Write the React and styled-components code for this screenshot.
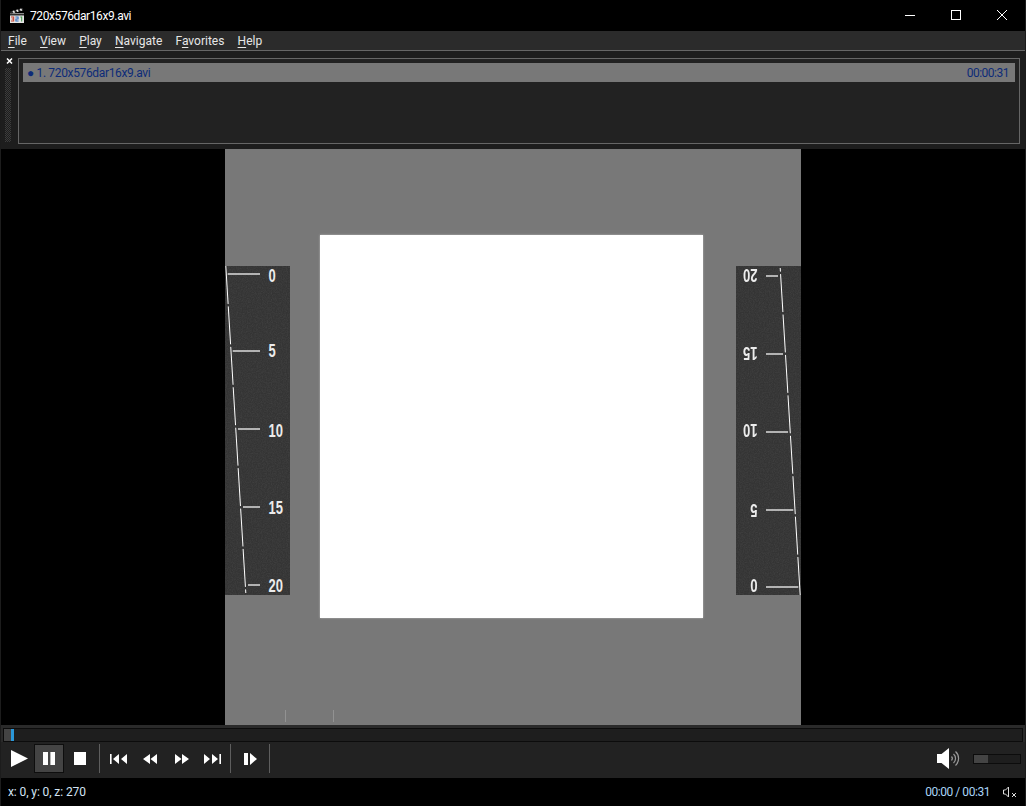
import React from "react";
import styled, { createGlobalStyle } from "styled-components";

const GlobalStyle = createGlobalStyle`
  html, body {
    margin: 0;
    padding: 0;
    background: #000;
  }
  body {
    font-family: Roboto, "Noto Sans", sans-serif;
    font-size: 12px;
    overflow: hidden;
  }
`;

const Window = styled.div`
  width: 1026px;
  height: 806px;
  box-sizing: border-box;
  border-left: 1px solid #1c1c1c;
  border-right: 1px solid #1c1c1c;
  display: flex;
  flex-direction: column;
  background: #000;
`;

const TitleBar = styled.div`
  height: 31px;
  flex: none;
  display: flex;
  align-items: center;
  background: #000;
  color: #fff;
  padding-left: 9px;
`;

const TitleText = styled.span`
  margin-left: 6px;
  font-size: 12px;
  letter-spacing: -0.4px;
`;

const WindowButtons = styled.div`
  margin-left: auto;
  display: flex;
  height: 100%;
`;

const WindowButton = styled.div`
  width: 46px;
  display: flex;
  align-items: center;
  justify-content: center;
  padding-bottom: 1px;
`;

const MenuBar = styled.div`
  height: 19px;
  flex: none;
  display: flex;
  align-items: center;
  gap: 13.2px;
  padding-left: 7px;
  background: #2b2b2b;
  border-bottom: 1px solid #666;
  color: #e6e6e6;
  font-size: 12px;
`;

const MenuItem = styled.span`
  u {
    text-underline-offset: 2px;
  }
`;

const PlaylistPanel = styled.div`
  height: 98px;
  flex: none;
  display: flex;
  background: #1d1d1d;
`;

const PanelGrip = styled.div`
  width: 17px;
  flex: none;
  display: flex;
  flex-direction: column;
  align-items: center;
  padding-top: 7px;
  box-sizing: border-box;
`;

const GripDots = styled.div`
  width: 6px;
  height: 74px;
  margin-top: 4px;
  margin-right: 3px;
  background-image: repeating-conic-gradient(#3c3c3c 0 25%, transparent 0 50%);
  background-size: 2px 2px;
`;

const PlaylistBox = styled.div`
  flex: 1;
  margin: 7px 5px 5px 0;
  border: 1px solid #666;
  background: #222;
  padding: 4px;
`;

const PlaylistRow = styled.div`
  height: 19px;
  display: flex;
  align-items: center;
  justify-content: space-between;
  padding: 0 6px 0 4px;
  background: #787878;
  color: #0d2b78;
  font-size: 12px;
  letter-spacing: -0.35px;
`;

const Duration = styled.span`
  letter-spacing: -0.5px;
`;

const VideoArea = styled.div`
  height: 576px;
  flex: none;
  background: #000;
  display: flex;
  justify-content: center;
`;

const Frame = styled.div`
  position: relative;
  width: 576px;
  height: 576px;
  background: #787878;
  display: flex;
  align-items: flex-start;
`;

const GaugeSlot = styled.div`
  margin-top: 117px;
  height: 329px;
  transform: ${(p) => (p.$flip ? "rotate(180deg)" : "none")};
`;

const WhiteSquare = styled.div`
  width: 383px;
  height: 383px;
  margin: 86px 33px 0 30px;
  background: #fff;
  box-shadow: 0 0 2px #b8b8b8;
`;

const FaintMark = styled.div`
  position: absolute;
  bottom: 3px;
  left: ${(p) => p.$left}px;
  width: 1px;
  height: 12px;
  background: #929292;
`;

const SeekRow = styled.div`
  height: 17px;
  flex: none;
  box-sizing: border-box;
  padding: 3px 2px 0;
  background: #2a2a2a;
`;

const SeekTrack = styled.div`
  height: 14px;
  box-sizing: border-box;
  display: flex;
  background: #1e1e1e;
  border: 1px solid #0c0c0c;
`;

const SeekFill = styled.div`
  width: 7px;
  background: #444;
`;

const SeekThumb = styled.div`
  width: 3px;
  background: #2a97d8;
`;

const Controls = styled.div`
  height: 36px;
  flex: none;
  box-sizing: border-box;
  display: flex;
  align-items: flex-start;
  padding: 2px 4px 0 3px;
  background: #222;
`;

const ToolButton = styled.div`
  width: ${(p) => p.$w}px;
  height: 29px;
  box-sizing: border-box;
  display: flex;
  align-items: center;
  justify-content: center;
  ${(p) =>
    p.$active
      ? "background: #444; border: 1px solid #0e0e0e;"
      : ""}
`;

const Separator = styled.div`
  width: 1px;
  height: 29px;
  margin: 0 ${(p) => p.$right}px 0 ${(p) => p.$left}px;
  background: #5e5e5e;
`;

const VolumeGroup = styled.div`
  margin-left: auto;
  display: flex;
  align-items: center;
  gap: 13px;
  height: 29px;
`;

const VolumeTrack = styled.div`
  width: 48px;
  height: 10px;
  box-sizing: border-box;
  background: #1e1e1e;
  border: 1px solid #0c0c0c;
`;

const VolumeFill = styled.div`
  width: 14px;
  height: 100%;
  background: #444;
`;

const StatusBar = styled.div`
  height: 28px;
  flex: none;
  display: flex;
  align-items: center;
  padding: 0 8px 0 7px;
  background: #000;
  color: #d3e4f5;
  font-size: 12px;
  letter-spacing: -0.1px;
`;

const StatusTime = styled.span`
  margin-left: auto;
  margin-right: 13px;
  color: #a9d4f7;
  letter-spacing: -0.45px;
`;

const Icon = ({ w, h, children, fill = "#fff" }) => (
  <svg width={w} height={h} viewBox={`0 0 ${w} ${h}`} fill={fill} style={{ display: "block" }}>
    {children}
  </svg>
);

const Clapper = () => (
  <svg width="14" height="15" viewBox="0 0 14 15" style={{ display: "block" }}>
    <rect x="0" y="5" width="14" height="10" fill="#e4e4e4" />
    <path d="M0 3.6 12.6 0 13.4 2.2 0.6 5.8Z" fill="#2a2a2a" />
    <path d="M2.4 3 4 2.5 5.2 4.6 3.6 5ZM6 2 7.6 1.5 8.8 3.6 7.2 4ZM9.6 1 11.2 0.5 12.4 2.6 10.8 3Z" fill="#e8e8e8" />
    <rect x="0" y="5.5" width="14" height="2" fill="#2e2e2e" />
    <path d="M1 8.5H4.2V13.5H1V12.6H3.2V11.4H1.6V10.6H3.2V9.4H1Z" fill="#c8402e" />
    <path d="M5.4 8.5H8.6V11.4H6.4V12.6H8.6V13.5H5.4V10.6H7.6V9.4H5.4Z" fill="#2f6fc4" />
    <path d="M10.4 8.5H12.2V13.5H11.2V9.4H10.4Z" fill="#3f9a46" />
  </svg>
);

const ticks = [
  { label: "0", x1: 2.7, y: 8, ty: 16 },
  { label: "5", x1: 7.7, y: 85, ty: 91 },
  { label: "10", x1: 13, y: 163, ty: 171 },
  { label: "15", x1: 18, y: 241, ty: 248 },
  { label: "20", x1: 23, y: 319, ty: 326 },
];

const Gauge = ({ id }) => (
  <svg width="65" height="329" viewBox="0 0 65 329" style={{ display: "block" }}>
    <defs>
      <filter id={id} x="0" y="0" width="100%" height="100%">
        <feTurbulence type="fractalNoise" baseFrequency="0.8" numOctaves="2" seed="4" />
        <feColorMatrix
          type="matrix"
          values="0 0 0 0 0.45  0 0 0 0 0.45  0 0 0 0 0.45  0.9 0 0 0 -0.3"
        />
      </filter>
    </defs>
    <rect width="65" height="329" fill="#343434" />
    <rect width="65" height="329" filter={`url(#${id})`} opacity="0.2" />
    <line x1="0.8" y1="0" x2="20.8" y2="327" stroke="#fff" strokeWidth="1" strokeDasharray="38 2.5" />
    {ticks.map((t) => (
      <g key={t.label}>
        <line x1={t.x1} y1={t.y} x2="35" y2={t.y} stroke="#dcdcdc" strokeWidth="1.5" />
        <text
          transform={`translate(43.5 ${t.ty}) scale(.72 1)`}
          fontFamily="Liberation Sans, sans-serif"
          fontWeight="700"
          fontSize="18"
          fill="#ececec"
        >
          {t.label}
        </text>
      </g>
    ))}
  </svg>
);

export default function App() {
  return (
    <>
      <GlobalStyle />
      <Window>
        <TitleBar>
          <Clapper />
          <TitleText>720x576dar16x9.avi</TitleText>
          <WindowButtons>
            <WindowButton>
              <Icon w={10} h={10}>
                <rect x="0" y="5" width="10" height="1" />
              </Icon>
            </WindowButton>
            <WindowButton>
              <Icon w={10} h={10} fill="none">
                <rect x="0.5" y="0.5" width="9" height="9" stroke="#fff" />
              </Icon>
            </WindowButton>
            <WindowButton>
              <Icon w={10} h={10} fill="none">
                <path d="M0 0 10 10M10 0 0 10" stroke="#fff" />
              </Icon>
            </WindowButton>
          </WindowButtons>
        </TitleBar>

        <MenuBar>
          <MenuItem><u>F</u>ile</MenuItem>
          <MenuItem><u>V</u>iew</MenuItem>
          <MenuItem><u>P</u>lay</MenuItem>
          <MenuItem><u>N</u>avigate</MenuItem>
          <MenuItem>F<u>a</u>vorites</MenuItem>
          <MenuItem><u>H</u>elp</MenuItem>
        </MenuBar>

        <PlaylistPanel>
          <PanelGrip>
            <Icon w={7} h={6} fill="none">
              <path d="M1 0.5 6 5.5M6 0.5 1 5.5" stroke="#fff" strokeWidth="1.5" />
            </Icon>
            <GripDots />
          </PanelGrip>
          <PlaylistBox>
            <PlaylistRow>
              <span>● 1. 720x576dar16x9.avi</span>
              <Duration>00:00:31</Duration>
            </PlaylistRow>
          </PlaylistBox>
        </PlaylistPanel>

        <VideoArea>
          <Frame>
            <GaugeSlot>
              <Gauge id="noise-left" />
            </GaugeSlot>
            <WhiteSquare />
            <GaugeSlot $flip>
              <Gauge id="noise-right" />
            </GaugeSlot>
            <FaintMark $left={60} />
            <FaintMark $left={108} />
          </Frame>
        </VideoArea>

        <SeekRow>
          <SeekTrack>
            <SeekFill />
            <SeekThumb />
          </SeekTrack>
        </SeekRow>

        <Controls>
          <ToolButton $w={30}>
            <Icon w={17} h={17}>
              <path d="M0 0 17 8.5 0 17Z" />
            </Icon>
          </ToolButton>
          <ToolButton $w={30} $active>
            <Icon w={12} h={13}>
              <rect x="0" width="5" height="13" />
              <rect x="7.4" width="4.6" height="13" />
            </Icon>
          </ToolButton>
          <ToolButton $w={31}>
            <Icon w={12} h={13}>
              <rect width="12" height="13" />
            </Icon>
          </ToolButton>
          <Separator $left={4} $right={3} />
          <ToolButton $w={31}>
            <Icon w={17} h={10}>
              <rect width="1.6" height="10" />
              <path d="M9 0V10L3 5ZM17 0V10L11 5Z" />
            </Icon>
          </ToolButton>
          <ToolButton $w={32}>
            <Icon w={14} h={10}>
              <path d="M7 0V10L0 5ZM14 0V10L7.5 5Z" />
            </Icon>
          </ToolButton>
          <ToolButton $w={32}>
            <Icon w={14} h={10}>
              <path d="M0 0V10L6.5 5ZM7 0V10L14 5Z" />
            </Icon>
          </ToolButton>
          <ToolButton $w={28}>
            <Icon w={17} h={10}>
              <rect x="15.4" width="1.6" height="10" />
              <path d="M0 0V10L6 5ZM8 0V10L14 5Z" />
            </Icon>
          </ToolButton>
          <Separator $left={4} $right={4} />
          <ToolButton $w={30}>
            <Icon w={13} h={12}>
              <rect width="4" height="12" />
              <path d="M6 0V12L13 6Z" />
            </Icon>
          </ToolButton>
          <Separator $left={4} $right={3} />
          <VolumeGroup>
            <Icon w={23} h={21}>
              <path d="M0 6H4.5L12 0V21L4.5 15H0Z" />
              <g fill="none" stroke="#9a9a9a" strokeWidth="1.2">
                <path d="M14.5 8.5A3 3 0 0 1 14.5 12.5" />
                <path d="M16.5 6A6 6 0 0 1 16.5 15" />
                <path d="M18.5 3.5A9.5 9.5 0 0 1 18.5 17.5" />
              </g>
            </Icon>
            <VolumeTrack>
              <VolumeFill />
            </VolumeTrack>
          </VolumeGroup>
        </Controls>

        <StatusBar>
          <span>x: 0, y: 0, z: 270</span>
          <StatusTime>00:00 / 00:31</StatusTime>
          <Icon w={14} h={12} fill="none">
            <path d="M0.5 4H2.5L5.5 1V11L2.5 8H0.5Z" stroke="#ddd" />
            <path d="M9 7 13 11M13 7 9 11" stroke="#ddd" />
          </Icon>
        </StatusBar>
      </Window>
    </>
  );
}
